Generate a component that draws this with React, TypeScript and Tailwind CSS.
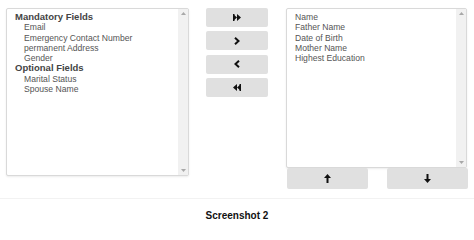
const mandatory = ["Email", "Emergency Contact Number", "permanent Address", "Gender"];
const optional = ["Marital Status", "Spouse Name"];
const selected = ["Name", "Father Name", "Date of Birth", "Mother Name", "Highest Education"];

function ScrollTrack() {
  return (
    <div className="w-[10px] h-full bg-[#f1f1f1] flex flex-col items-center justify-between py-[3px]">
      <svg width="5" height="3" viewBox="0 0 5 3">
        <path d="M0 3 L2.5 0 L5 3 Z" fill="#a8a8a8" />
      </svg>
      <svg width="5" height="3" viewBox="0 0 5 3">
        <path d="M0 0 L2.5 3 L5 0 Z" fill="#a8a8a8" />
      </svg>
    </div>
  );
}

function Icon({ kind }: { kind: string }) {
  if (kind === "all-right")
    return (
      <svg width="8" height="7" viewBox="0 0 8 7">
        <path d="M0 0 L4 3.5 L0 7 Z M4 0 L8 3.5 L4 7 Z" fill="#111" />
        <rect x="0" y="0" width="1.5" height="7" fill="#111" />
      </svg>
    );
  if (kind === "all-left")
    return (
      <svg width="8" height="7" viewBox="0 0 8 7">
        <path d="M8 0 L4 3.5 L8 7 Z M4 0 L0 3.5 L4 7 Z" fill="#111" />
        <rect x="6.5" y="0" width="1.5" height="7" fill="#111" />
      </svg>
    );
  if (kind === "right")
    return (
      <svg width="6" height="8" viewBox="0 0 6 8">
        <path d="M1 0.8 L4.5 4 L1 7.2" stroke="#111" strokeWidth="2" fill="none" />
      </svg>
    );
  if (kind === "left")
    return (
      <svg width="6" height="8" viewBox="0 0 6 8">
        <path d="M5 0.8 L1.5 4 L5 7.2" stroke="#111" strokeWidth="2" fill="none" />
      </svg>
    );
  if (kind === "up")
    return (
      <svg width="7" height="9" viewBox="0 0 7 9">
        <path d="M0 4 L3.5 0 L7 4 Z" fill="#111" />
        <rect x="2.5" y="3.5" width="2" height="5.5" fill="#111" />
      </svg>
    );
  return (
    <svg width="7" height="9" viewBox="0 0 7 9">
      <path d="M0 5 L3.5 9 L7 5 Z" fill="#111" />
      <rect x="2.5" y="0" width="2" height="5.5" fill="#111" />
    </svg>
  );
}

export default function App() {
  return (
    <main className="w-[474px] h-[225px] bg-white overflow-hidden text-[8.6px] leading-[10.3px] text-[#555]" style={{ fontFamily: '"Liberation Sans", Arial, sans-serif' }}>
      <div className="flex pl-[6px] pt-[8px] h-[191px]">
        {/* Left list */}
        <div className="w-[183px] h-[168px] border border-[#d9d9d9] rounded-[2px] shadow-[0_1px_2px_rgba(0,0,0,0.08)] flex bg-white">
          <div className="flex-1 pl-[8px] pt-[3px]">
            <div className="font-bold text-[9.5px] text-[#444]">Mandatory Fields</div>
            {mandatory.map((m) => (
              <div key={m} className="pl-[9px]">{m}</div>
            ))}
            <div className="font-bold text-[9.5px] text-[#444]">Optional Fields</div>
            {optional.map((m) => (
              <div key={m} className="pl-[9px]">{m}</div>
            ))}
          </div>
          <ScrollTrack />
        </div>

        {/* Move buttons */}
        <div className="ml-[17px] w-[62px] flex flex-col gap-[4.3px]">
          {["all-right", "right", "left", "all-left"].map((k) => (
            <button key={k} className="h-[19px] bg-[#e0e0e0] rounded-[2px] flex items-center justify-center">
              <Icon kind={k} />
            </button>
          ))}
        </div>

        {/* Right list */}
        <div className="ml-[18px] w-[182px] flex flex-col">
          <div className="w-[181px] h-[160px] border border-[#d9d9d9] rounded-[2px] shadow-[0_1px_2px_rgba(0,0,0,0.08)] flex bg-white">
            <div className="flex-1 pl-[8px] pt-[3px]">
              {selected.map((s) => (
                <div key={s}>{s}</div>
              ))}
            </div>
            <ScrollTrack />
          </div>
          <div className="flex justify-between pl-[1px] h-[21px]">
            <button className="w-[81px] h-[21px] bg-[#e0e0e0] rounded-[2px] flex items-center justify-center">
              <Icon kind="up" />
            </button>
            <button className="w-[81px] h-[21px] bg-[#e0e0e0] rounded-[2px] flex items-center justify-center">
              <Icon kind="down" />
            </button>
          </div>
        </div>
      </div>

      <div className="mt-[7px] border-t border-[#f2f2f2] pt-[12px] text-center">
        <span className="font-bold text-[10px] text-[#111]">Screenshot 2</span>
      </div>
    </main>
  );
}
